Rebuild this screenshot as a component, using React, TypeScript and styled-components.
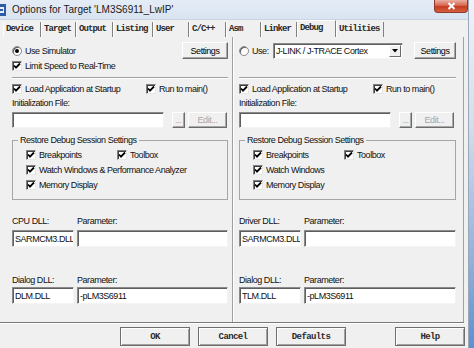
import styled, { createGlobalStyle } from 'styled-components';

const GlobalStyle = createGlobalStyle`
  html, body {
    margin: 0;
    padding: 0;
    background: #f0f0f0;
  }
  body {
    font-family: 'Liberation Sans', Arial, sans-serif;
    color: #000;
  }
  * {
    box-sizing: border-box;
  }
`;

const Window = styled.div`
  width: 474px;
  height: 348px;
  display: flex;
  overflow: hidden;
  background: #f0f0f0;
`;

const Main = styled.div`
  width: 468px;
  display: flex;
  flex-direction: column;
`;

const Frame = styled.div`
  width: 6px;
  border-left: 1px solid #9aa8b8;
  background: linear-gradient(#eef3f9 0%, #d3dfed 35%, #8fb1db 75%, #5f8fcf 100%);
`;

const TitleBar = styled.div`
  height: 20px;
  display: flex;
  align-items: center;
  background: linear-gradient(#e4ecf6, #d9e4f1);
  border-bottom: 1px solid #c9d5e4;
`;

const AppIcon = styled.svg`
  width: 6px;
  height: 12px;
  margin-top: 1px;
`;

const Title = styled.span`
  margin-left: 6px;
  font-size: 10px;
  color: #1a1a1a;
`;

const CloseButton = styled.div`
  margin-left: auto;
  align-self: flex-start;
  width: 34px;
  height: 13px;
  display: flex;
  align-items: center;
  justify-content: center;
  border: 1px solid #8c3b2c;
  border-top: none;
  border-radius: 0 0 4px 4px;
  background: linear-gradient(#eab0a2 0%, #d8674f 45%, #c43b22 55%, #d6603f 100%);
`;

const Body = styled.div`
  flex: 1;
  display: flex;
  flex-direction: column;
`;

const TabStrip = styled.div`
  height: 17px;
  display: flex;
  align-items: flex-end;
  padding-left: 3px;
`;

const Tab = styled.div<{ $w: number; $active?: boolean }>`
  width: ${(p) => p.$w}px;
  height: ${(p) => (p.$active ? 17 : 15)}px;
  padding-left: 2px;
  line-height: ${(p) => (p.$active ? 14 : 15)}px;
  border-left: 1px solid #fff;
  border-right: 1px solid #808080;
  border-top: ${(p) => (p.$active ? '1px solid #fff' : 'none')};
  font-family: 'Liberation Mono', 'Courier New', monospace;
  font-weight: bold;
  font-size: 9px;
  letter-spacing: -0.9px;
  color: #2a2a2a;
  white-space: nowrap;
`;

const Panel = styled.div`
  height: 286px;
  width: 464px;
  display: flex;
  padding: 5px 0 0 12px;
  border-right: 1px solid #a0a0a0;
  border-bottom: 1px solid #7a7a7a;
  box-shadow: 0 1px 0 #fff;
`;

const Column = styled.div<{ $w: number }>`
  width: ${(p) => p.$w}px;
  display: flex;
  flex-direction: column;
  font-size: 9px;
  letter-spacing: -0.45px;
  color: #111;
`;

const Divider = styled.div`
  width: 2px;
  margin: -5px 5px 0 4px;
  border-left: 1px solid #a0a0a0;
  border-right: 1px solid #fff;
`;

const TopBlock = styled.div`
  height: 35px;
  display: flex;
  flex-direction: column;
`;

const ToolRow = styled.div`
  height: 17px;
  display: flex;
  align-items: center;
`;

const Separator = styled.div`
  height: 2px;
  border-top: 1px solid #a0a0a0;
  border-bottom: 1px solid #fff;
`;

const Option = styled.label<{ $h?: number; $span?: boolean }>`
  height: ${(p) => p.$h ?? 14}px;
  display: flex;
  align-items: center;
  gap: 3px;
  white-space: nowrap;
  grid-column: ${(p) => (p.$span ? '1 / span 2' : 'auto')};
`;

const Box = styled.span`
  width: 10px;
  height: 10px;
  flex: none;
  display: flex;
  align-items: center;
  justify-content: center;
  background: #fff;
  border: 1px solid;
  border-color: #7f7f7f #e6e6e6 #e6e6e6 #7f7f7f;
  box-shadow: inset 1px 1px 0 #404040;
`;

const Round = styled.span<{ $on?: boolean }>`
  width: 10px;
  height: 10px;
  flex: none;
  border-radius: 50%;
  background: #fff;
  border: 1px solid #8a8a8a;
  box-shadow: inset 1px 1px 0 #5a5a5a;
  display: flex;
  align-items: center;
  justify-content: center;
  &::after {
    content: '';
    width: 4px;
    height: 4px;
    border-radius: 50%;
    background: ${(p) => (p.$on ? '#000' : 'transparent')};
  }
`;

const OptionPair = styled.div<{ $mt: number }>`
  margin-top: ${(p) => p.$mt}px;
  display: grid;
  grid-template-columns: 134px auto;
`;

const FieldLabel = styled.div<{ $mt: number }>`
  margin-top: ${(p) => p.$mt}px;
  height: 12px;
  line-height: 12px;
  white-space: nowrap;
`;

const LabelPair = styled(FieldLabel)<{ $first: number }>`
  display: grid;
  grid-template-columns: ${(p) => p.$first}px auto;
  column-gap: 3px;
`;

const FileRow = styled.div`
  margin-top: 3px;
  height: 16px;
  display: flex;
`;

const InputPair = styled.div<{ $mt: number; $second: number }>`
  margin-top: ${(p) => p.$mt}px;
  height: 17px;
  display: grid;
  grid-template-columns: 62px ${(p) => p.$second}px;
  column-gap: 3px;
`;

const TextBox = styled.div<{ $w?: number }>`
  width: ${(p) => (p.$w ? `${p.$w}px` : 'auto')};
  height: 100%;
  padding: 1px 0 0 2px;
  background: #fff;
  border: 1px solid;
  border-color: #8a8a8a #f4f4f4 #f4f4f4 #8a8a8a;
  box-shadow: inset 1px 1px 0 #5e5e5e;
  display: flex;
  align-items: center;
  white-space: nowrap;
  overflow: hidden;
`;

const Button = styled.div<{ $w: number; $ml?: number; $disabled?: boolean }>`
  width: ${(p) => p.$w}px;
  height: 100%;
  margin-left: ${(p) => (p.$ml === undefined ? 'auto' : `${p.$ml}px`)};
  display: flex;
  align-items: center;
  justify-content: center;
  background: #f0f0f0;
  border: 1px solid;
  border-color: #fff #6b6b6b #6b6b6b #fff;
  box-shadow: inset -1px -1px 0 #a8a8a8;
  color: ${(p) => (p.$disabled ? '#a6a6a6' : '#000')};
  white-space: nowrap;
`;

const Combo = styled.div`
  width: 130px;
  height: 16px;
  margin-left: auto;
  display: flex;
  background: #fff;
  border: 1px solid;
  border-color: #8a8a8a #f4f4f4 #f4f4f4 #8a8a8a;
  box-shadow: inset 1px 1px 0 #5e5e5e;
`;

const ComboText = styled.span`
  flex: 1;
  padding: 1px 0 0 2px;
  line-height: 13px;
  white-space: nowrap;
`;

const ComboArrow = styled.span`
  width: 12px;
  margin: 1px 1px 1px 0;
  display: flex;
  align-items: center;
  justify-content: center;
  background: #f0f0f0;
  border: 1px solid;
  border-color: #fff #6b6b6b #6b6b6b #fff;
`;

const Group = styled.fieldset`
  margin: 6px 0 0;
  padding: 0;
  border: 1px solid #a6a6a6;
  min-width: 0;
`;

const Legend = styled.legend`
  margin-left: 5px;
  padding: 0 2px;
  line-height: 12px;
  height: 12px;
`;

const GroupGrid = styled.div`
  display: grid;
  grid-template-columns: 91px auto;
  grid-auto-rows: 14px;
  row-gap: 1px;
  padding: 2px 0 7px 13px;
`;

const Footer = styled.div`
  flex: 1;
  display: flex;
  gap: 8px;
  padding: 4px 3px 0 120px;
`;

const DialogButton = styled.div<{ $push?: boolean }>`
  width: 70px;
  height: 19px;
  margin-left: ${(p) => (p.$push ? 'auto' : '0')};
  display: flex;
  align-items: center;
  justify-content: center;
  background: #f0f0f0;
  border: 1px solid #6e6e6e;
  box-shadow: inset 1px 1px 0 #fff, inset -1px -1px 0 #a0a0a0;
  font-family: 'Liberation Mono', 'Courier New', monospace;
  font-weight: bold;
  font-size: 9px;
  letter-spacing: -0.6px;
  color: #2a2a2a;
`;

const Tick = () => (
  <svg width="8" height="8" viewBox="0 0 8 8">
    <polyline points="1,3.5 3,5.6 7,1.5" fill="none" stroke="#000" strokeWidth="1.8" />
  </svg>
);

const Check = ({ text, h, span }: { text: string; h?: number; span?: boolean }) => (
  <Option $h={h} $span={span}>
    <Box>
      <Tick />
    </Box>
    <span>{text}</span>
  </Option>
);

const tabs = [
  { name: 'Device', w: 38 },
  { name: 'Target', w: 35 },
  { name: 'Output', w: 37 },
  { name: 'Listing', w: 40 },
  { name: 'User', w: 36 },
  { name: 'C/C++', w: 37 },
  { name: 'Asm', w: 35 },
  { name: 'Linker', w: 36 },
  { name: 'Debug', w: 39, active: true },
  { name: 'Utilities', w: 48 },
];

type SideProps = {
  w: number;
  top: React.ReactNode;
  watch: string;
  dllLabel: string;
  dll: string;
  dialog: string;
};

const Side = ({ w, top, watch, dllLabel, dll, dialog }: SideProps) => {
  const second = w - 65;
  return (
    <Column $w={w}>
      <TopBlock>{top}</TopBlock>
      <Separator />
      <OptionPair $mt={3}>
        <Check text="Load Application at Startup" />
        <Check text="Run to main()" />
      </OptionPair>
      <FieldLabel $mt={1}>Initialization File:</FieldLabel>
      <FileRow>
        <TextBox $w={152} />
        <Button $w={13} $ml={8} $disabled>
          ...
        </Button>
        <Button $w={39} $ml={3} $disabled>
          Edit...
        </Button>
      </FileRow>
      <Group>
        <Legend>Restore Debug Session Settings</Legend>
        <GroupGrid>
          <Check text="Breakpoints" />
          <Check text="Toolbox" />
          <Check text={watch} span />
          <Check text="Memory Display" span />
        </GroupGrid>
      </Group>
      <LabelPair $mt={15} $first={62}>
        <span>{dllLabel}</span>
        <span>Parameter:</span>
      </LabelPair>
      <InputPair $mt={3} $second={second}>
        <TextBox>{dll}</TextBox>
        <TextBox />
      </InputPair>
      <LabelPair $mt={27} $first={62}>
        <span>Dialog DLL:</span>
        <span>Parameter:</span>
      </LabelPair>
      <InputPair $mt={1} $second={second}>
        <TextBox>{dialog}</TextBox>
        <TextBox>-pLM3S6911</TextBox>
      </InputPair>
    </Column>
  );
};

export default function App() {
  return (
    <>
      <GlobalStyle />
      <Window>
        <Main>
          <TitleBar>
            <AppIcon viewBox="0 0 6 12">
              <rect x="0" y="0" width="6" height="12" fill="#2f5aa8" />
              <rect x="0" y="3" width="4" height="6" fill="#e8eef8" />
              <rect x="0" y="5" width="3" height="2" fill="#2f5aa8" />
            </AppIcon>
            <Title>Options for Target 'LM3S6911_LwIP'</Title>
            <CloseButton>
              <svg width="9" height="8" viewBox="0 0 9 8">
                <path d="M1.5 1 L7.5 7 M7.5 1 L1.5 7" stroke="#fff" strokeWidth="2" />
              </svg>
            </CloseButton>
          </TitleBar>
          <Body>
            <TabStrip>
              {tabs.map((t) => (
                <Tab key={t.name} $w={t.w} $active={t.active}>
                  {t.name}
                </Tab>
              ))}
            </TabStrip>
            <Panel>
              <Side
                w={216}
                top={
                  <>
                    <ToolRow>
                      <Option $h={17}>
                        <Round $on />
                        <span>Use Simulator</span>
                      </Option>
                      <Button $w={46}>Settings</Button>
                    </ToolRow>
                    <Check text="Limit Speed to Real-Time" h={13} />
                  </>
                }
                watch="Watch Windows & Performance Analyzer"
                dllLabel="CPU DLL:"
                dll="SARMCM3.DLL"
                dialog="DLM.DLL"
              />
              <Divider />
              <Side
                w={217}
                top={
                  <ToolRow>
                    <Option $h={17}>
                      <Round />
                      <span>Use:</span>
                    </Option>
                    <Combo>
                      <ComboText>J-LINK / J-TRACE Cortex</ComboText>
                      <ComboArrow>
                        <svg width="6" height="4" viewBox="0 0 6 4">
                          <path d="M0 0 H6 L3 3.5 Z" fill="#000" />
                        </svg>
                      </ComboArrow>
                    </Combo>
                    <Button $w={42} $ml={11}>
                      Settings
                    </Button>
                  </ToolRow>
                }
                watch="Watch Windows"
                dllLabel="Driver DLL:"
                dll="SARMCM3.DLL"
                dialog="TLM.DLL"
              />
            </Panel>
            <Footer>
              <DialogButton>OK</DialogButton>
              <DialogButton>Cancel</DialogButton>
              <DialogButton>Defaults</DialogButton>
              <DialogButton $push>Help</DialogButton>
            </Footer>
          </Body>
        </Main>
        <Frame />
      </Window>
    </>
  );
}
